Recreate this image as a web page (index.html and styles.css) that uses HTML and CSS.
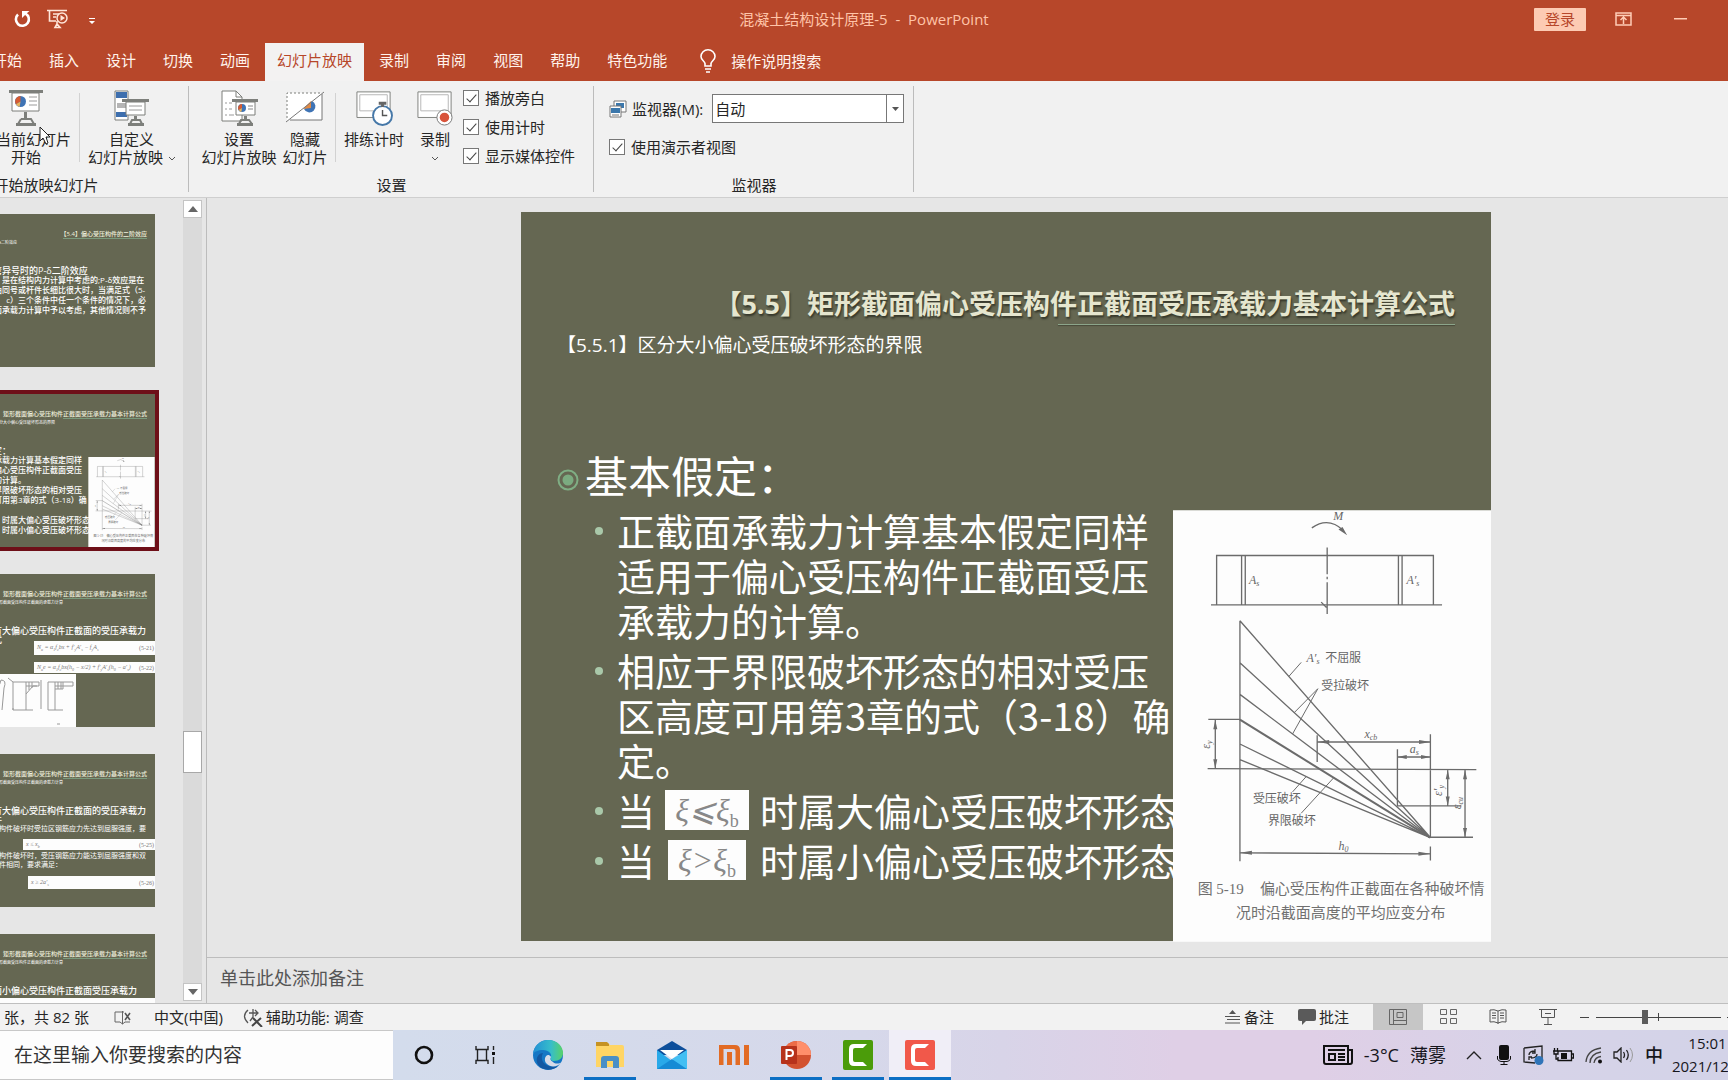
FILE: index.html
```html
<!DOCTYPE html>
<html lang="zh-CN">
<head>
<meta charset="utf-8">
<title>混凝土结构设计原理-5 - PowerPoint</title>
<link rel="stylesheet" href="styles.css">
</head>
<body>
<svg class="defs" aria-hidden="true">
  <symbol id="figure" viewBox="39 30 955 1296">
    <rect x="39" y="30" width="955" height="1296" fill="#fdfdfd"/>
    <g fill="none" stroke="#6b6b6b" stroke-width="4">
      <path d="M456 83Q505 48 550 90M170 314V166H821V314M153 314H847M245 166V314M256 166V314M716 166V314M727 166V314"/>
      <path d="M502 142V222M502 246V342M502 230V237M484 306L500 322" />
      <path d="M240 362V1084M240 362L812 1013M240 488L812 1013M240 583L812 1013M240 732L812 1013M240 779L812 1013"/>
      <path d="M240 659L812 1013" stroke-width="6"/>
      <path d="M145 658H240M143 806L950 809M166 660V805M472 706V786M474 726H812M812 703V1013M713 748V918H905M713 771H812M864 810V918M916 810V1012M805 1012H940M812 1040V1082M240 1059L812 1062"/>
      <path d="M424 487L387 529M474 566L402 639M474 566L398 702M438 831L398 876M523 832L424 940" stroke-width="3"/>
    </g>
    <g fill="#6b6b6b">
      <path d="M562 105L536 88L548 80ZM166 660L160 688H172ZM166 806L160 778H172ZM474 726L508 720V732ZM812 726L778 720V732ZM713 771L741 765V777ZM812 771L784 765V777ZM864 810L858 838H870ZM864 918L858 890H870ZM916 810L910 838H922ZM916 1012L910 984H922ZM240 1059L276 1053V1065ZM812 1062L776 1056V1068Z"/>
    </g>
    <g class="fig-math">
      <text x="520" y="60">M</text>
      <text x="267" y="252">A<tspan class="fig-sub" dy="6">s</tspan></text>
      <text x="740" y="252">A′<tspan class="fig-sub" dy="6">s</tspan></text>
      <text x="440" y="486">A′<tspan class="fig-sub" dy="6">s</tspan></text>
      <text x="614" y="714">x<tspan class="fig-sub" dy="6">cb</tspan></text>
      <text x="750" y="760">a<tspan class="fig-sub" dy="6">s</tspan></text>
      <text x="536" y="1050">h<tspan class="fig-sub" dy="6">0</tspan></text>
      <text transform="translate(150 746) rotate(-90)">ε<tspan class="fig-sub" dy="6">y</tspan></text>
      <text transform="translate(848 888) rotate(-90)">ε′<tspan class="fig-sub" dy="6">y</tspan></text>
      <text transform="translate(904 928) rotate(-90)">ε<tspan class="fig-sub" dy="6">cu</tspan></text>
    </g>
    <g class="fig-note">
      <text x="496" y="487">不屈服</text>
      <text x="484" y="570">受拉破坏</text>
      <text x="279" y="910">受压破坏</text>
      <text x="324" y="976">界限破坏</text>
    </g>
    <g class="fig-caption">
      <text x="113" y="1183">图 5-19</text>
      <text x="300" y="1183">偏心受压构件正截面在各种破坏情</text>
      <text x="228" y="1254">况时沿截面高度的平均应变分布</text>
    </g>
  </symbol>
  <symbol id="easel" viewBox="0 0 34 36">
    <path d="M3 3H30V21H3Z" fill="#fff" stroke="#7d7f7b"/>
    <path d="M0 0H34V3H0ZM15 22H18V29H15ZM7 33H27V36H7Z" fill="#7d7f7b"/>
    <path d="M12 29H22L25 34M12 29L9 34" fill="none" stroke="#7d7f7b" stroke-width="2"/>
  </symbol>
  <symbol id="pie" viewBox="0 0 12 12">
    <circle cx="6" cy="6" r="6" fill="#3f74b5"/>
    <path d="M6 6V0A6 6 0 0 0 1 9Z" fill="#d65a31"/><path d="M6 6L1 9A6 6 0 0 0 5 12Z" fill="#e9b35b"/>
  </symbol>
</svg>

<header class="titlebar">
  <div class="quick">
    <button aria-label="重复"><svg width="18" height="18" viewBox="0 0 18 18"><path d="M5 4.500A6.500 6.500 0 1 0 12.500 3.600" fill="none" stroke="#fff" stroke-width="2.600"/><path d="M9 8V1H16.500L13.500 3.500L9 8Z" fill="#fff"/></svg></button>
    <button aria-label="从头开始放映"><svg width="22" height="20" viewBox="0 0 22 20"><path d="M0 1.500H20M2.500 2V12H9M6 5H12M6 8H9M8 18.500L10 15L13 18.500ZM10 12V15" fill="none" stroke="#ffe6da" stroke-width="1.600"/><circle cx="15" cy="9" r="5" fill="#b7472a" stroke="#ffe6da" stroke-width="1.500"/><path d="M13.500 6V12L18 9Z" fill="#ffe6da"/></svg></button>
    <button aria-label="自定义快速访问工具栏"><svg width="6" height="7" viewBox="0 0 6 7"><path d="M0 0H6V1H0ZM0 3H6L3 6Z" fill="#fff"/></svg></button>
  </div>
  <h1 class="doc-title">混凝土结构设计原理-5&nbsp; -&nbsp; PowerPoint</h1>
  <div class="window-tools">
    <button class="login">登录</button>
    <button aria-label="功能区显示选项"><svg width="17" height="14" viewBox="0 0 17 14"><path d="M1 1H16V13H1ZM1 3.500H16M8.500 12V5.500M5.500 8L8.500 5L11.500 8" fill="none" stroke="#ffcdb6" stroke-width="1.500"/></svg></button>
    <button aria-label="最小化"><svg width="13" height="2" viewBox="0 0 13 2"><path d="M0 0H13V1.500H0Z" fill="#ffcdb6"/></svg></button>
  </div>
</header>

<nav class="tabs">
  <button>开始</button><button>插入</button><button>设计</button><button>切换</button><button>动画</button><button class="active">幻灯片放映</button><button>录制</button><button>审阅</button><button>视图</button><button>帮助</button><button>特色功能</button>
  <button class="tell"><svg width="16" height="24" viewBox="0 0 16 24"><path d="M5 17V14.500C4.500 12 1 11 1 7.500A7 6.700 0 0 1 15 7.500C15 11 11.500 12 11 14.500V17ZM5 20H11M6 23H10" fill="none" stroke="#fff" stroke-width="1.600"/></svg>操作说明搜索</button>
</nav>

<section class="ribbon">
  <div class="group start">
    <div class="row">
      <button class="cmd w-first"><svg width="34" height="36"><use href="#easel"/></svg><span>从头<br>开始</span></button>
      <button class="cmd w-current"><svg width="34" height="36"><use href="#easel"/><use href="#pie" x="6" y="6" width="11" height="11"/><path d="M20 7H28M20 11H28M20 15H28" stroke="#9a9a9a"/></svg><span>从当前幻灯片<br>开始</span></button>
      <i class="sep"></i>
      <button class="cmd w-custom"><svg width="36" height="36" viewBox="0 0 36 36"><path d="M1 1H14V30H1Z" fill="#fff" stroke="#7d7f7b"/><path d="M2 2H13V8H2ZM2 22H13V27H2Z" fill="#3e6fae"/><path d="M3 13H13V18H3Z" fill="#b5b5b5"/><path d="M12 12H31V25H12Z" fill="#fff" stroke="#7d7f7b"/><path d="M8 9H35V12H8ZM20 26H23V30H20ZM14 33H30V36H14Z" fill="#7d7f7b"/><path d="M16 34L18 30H26L28 34" fill="none" stroke="#7d7f7b" stroke-width="2"/><path d="M15 16H28M15 20H28" stroke="#9a9a9a"/></svg><span>自定义<br>幻灯片放映<svg class="caret" width="6" height="4" viewBox="0 0 6 4"><path d="M0 0L3 3L6 0" fill="none" stroke="#555"/></svg></span></button>
    </div>
    <h2>开始放映幻灯片</h2>
  </div>
  <div class="group setup">
    <div class="row">
      <button class="cmd w-setup"><svg width="37" height="36" viewBox="0 0 37 36"><path d="M1 1H15L21 7V31H1Z" fill="#fff" stroke="#7d7f7b"/><path d="M15 1V7H21" fill="none" stroke="#7d7f7b"/><path d="M4 13H6M4 19H6M4 25H6M8 13H11M8 19H11M8 25H13" stroke="#999"/><path d="M15 12H34V25H15Z" fill="#fff" stroke="#7d7f7b"/><path d="M11 9H37V12H11ZM23 26H26V30H23ZM16 33H32V36H16Z" fill="#7d7f7b"/><path d="M18 34L20 30H28L31 34" fill="none" stroke="#7d7f7b" stroke-width="2"/><use href="#pie" x="17" y="14" width="8" height="8"/><path d="M27 16H32M27 19H32" stroke="#888"/></svg><span>设置<br>幻灯片放映</span></button>
      <button class="cmd w-hide"><svg width="38" height="36" viewBox="0 0 38 36"><path d="M1 3H36V30H1Z" fill="#fff"/><path d="M1 28V3H34" fill="none" stroke="#7d7f7b" stroke-dasharray="2 2"/><path d="M18 19L26 11A6 6 0 1 1 18 19Z" fill="#3f74b5"/><path d="M17 19L25 11V18Z" fill="#e28a45"/><path d="M0 32L38 2M4 30H36V4" fill="none" stroke="#777"/></svg><span>隐藏<br>幻灯片</span></button>
      <i class="sep"></i>
      <button class="cmd w-timing"><svg width="38" height="38" viewBox="0 0 38 38"><path d="M1 2H36V29H1Z" fill="#fff" stroke="#7d7f7b"/><path d="M4 5H33V22H4Z" fill="none" stroke="#b5b5b5"/><circle cx="28" cy="27" r="10" fill="#fff" stroke="#4678a8" stroke-width="2"/><path d="M24 14H32M28 14V18" stroke="#666" stroke-width="3"/><path d="M28 21V27H33" fill="none" stroke="#555" stroke-width="1.500"/></svg><span>排练计时</span></button>
      <button class="cmd w-record"><svg width="38" height="38" viewBox="0 0 38 38"><path d="M1 2H36V29H1Z" fill="#fff" stroke="#7d7f7b"/><path d="M4 5H33V22H4Z" fill="none" stroke="#b5b5b5"/><circle cx="29" cy="29" r="8" fill="#fff" stroke="#777"/><circle cx="29" cy="29" r="5" fill="#d8533a"/></svg><span>录制<br><svg class="caret" width="6" height="4" viewBox="0 0 6 4"><path d="M0 0L3 3L6 0" fill="none" stroke="#555"/></svg></span></button>
      <div class="checks">
        <label><input type="checkbox" checked>播放旁白</label>
        <label><input type="checkbox" checked>使用计时</label>
        <label><input type="checkbox" checked>显示媒体控件</label>
      </div>
    </div>
    <h2>设置</h2>
  </div>
  <div class="group monitor">
    <div class="row">
      <div class="mon-line">
        <svg width="18" height="18" viewBox="0 0 18 18"><path d="M5 1H17V12H5Z" fill="#fff" stroke="#777"/><path d="M7 3H15V8H7Z" fill="#3b77ab"/><path d="M1 6H12V17H1Z" fill="#fff" stroke="#777"/><path d="M2 8H11V13H2Z" fill="#3b77ab"/><path d="M3 15H10" stroke="#777"/></svg>
        <label for="mon">监视器(M):</label>
        <div class="combo"><select id="mon"><option>自动</option></select><span><svg width="7" height="4" viewBox="0 0 7 4"><path d="M0 0H7L3.500 4Z" fill="#555"/></svg></span></div>
      </div>
      <label><input type="checkbox" checked>使用演示者视图</label>
    </div>
    <h2>监视器</h2>
  </div>
  <svg class="cursor" width="13" height="19" viewBox="0 0 13 19"><path d="M1 1V15L4 12L7 18L9 17L7 11H11Z" fill="#fff" stroke="#222"/></svg>
</section>

<main class="workspace">
  <aside class="thumbs">
    <article class="thumb">
      <h3>【5.4】偏心受压构件的二阶效应</h3><p class="t-sub t-short">P-δ二阶效应</p>
      <p class="t-head">弯异号时的P-δ二阶效应</p>
      <p class="t-body">　是在结构内力计算中考虑的;P-δ效应是在<br>曲同号或杆件长细比很大时，当满足式（5-<br>　&nbsp; c）三个条件中任一个条件的情况下，必<br>面承载力计算中予以考虑，其他情况则不予</p>
    </article>
    <article class="thumb selected">
      <h3>5】矩形截面偏心受压构件正截面受压承载力基本计算公式</h3><p class="t-sub">区分大小偏心受压破坏形态的界限</p>
      <p class="t-head">定：</p>
      <p class="t-body">承载力计算基本假定同样<br>偏心受压构件正截面受压<br>的计算。<br>界限破坏形态的相对受压<br>可用第3章的式（3-18）确<br><br>　时属大偏心受压破坏形态<br>　时属小偏心受压破坏形态</p>
      <svg class="t-figure"><use href="#figure"/></svg>
    </article>
    <article class="thumb">
      <h3>5】矩形截面偏心受压构件正截面受压承载力基本计算公式</h3><p class="t-sub">矩形截面受压构件正截面的承载力计算</p>
      <p class="t-head">有大偏心受压构件正截面的受压承载力<br>式</p>
      <div class="eq eq-a"><i>N<sub>u</sub> = α<sub>1</sub>f<sub>c</sub>bx + f′<sub>y</sub>A′<sub>s</sub> − f<sub>y</sub>A<sub>s</sub></i><b>(5-21)</b></div>
      <div class="eq eq-b"><i>N<sub>u</sub>e = α<sub>1</sub>f<sub>c</sub>bx(h<sub>0</sub> − x/2) + f′<sub>y</sub>A′<sub>s</sub>(h<sub>0</sub> − a′<sub>s</sub>)</i><b>(5-22)</b></div>
      <svg class="t-sketch" width="125" height="53" viewBox="0 0 125 53"><rect width="125" height="53" fill="#fdfdfd"/><path d="M42 12Q48 16 50 6Q56 6 53 14L51 36M57 4L62 8H75V36H62V8M75 8H88V12H82L75 20M75 12H86M90 6V35M97 8H104V36H97ZM104 8H122V12H104M104 15H112V8M107 8V15M110 8V15M78 8V16M81 8V14M62 36V34M75 36H82M104 36H112M106 50H109" fill="none" stroke="#999"/></svg>
    </article>
    <article class="thumb">
      <h3>5】矩形截面偏心受压构件正截面受压承载力基本计算公式</h3><p class="t-sub">矩形截面受压构件正截面的承载力计算</p>
      <p class="t-head">有大偏心受压构件正截面的受压承载力<br>件</p>
      <p class="t-note">证构件破坏时受拉区钢筋应力先达到屈服强度，要</p>
      <div class="eq eq-c"><i>x ≤ x<sub>b</sub></i><b>(5-25)</b></div>
      <p class="t-note t-gap">证构件破坏时，受压钢筋应力能达到屈服强度和双<br>构件相同，要求满足：</p>
      <div class="eq eq-d"><i>x ≥ 2a′<sub>s</sub></i><b>(5-26)</b></div>
    </article>
    <article class="thumb">
      <h3>5】矩形截面偏心受压构件正截面受压承载力基本计算公式</h3><p class="t-sub">矩形截面受压构件正截面的承载力计算</p>
      <p class="t-head">面小偏心受压构件正截面受压承载力</p>
      <div class="eq eq-e"></div>
    </article>
  </aside>
  <div class="scroll">
    <button aria-label="向上"><svg width="10" height="6" viewBox="0 0 10 6"><path d="M0 6L5 0L10 6Z" fill="#666"/></svg></button>
    <i class="track-a"></i><i class="grip"></i><i class="track-b"></i>
    <button aria-label="向下"><svg width="10" height="6" viewBox="0 0 10 6"><path d="M0 0L5 6L10 0Z" fill="#666"/></svg></button>
  </div>
  <div class="editor">
    <div class="stage">
      <article class="slide">
        <h2 class="s-title">【5.5】矩形截面偏心受压构件正截面受压承载力基本计算公式</h2>
        <p class="s-sub">【5.5.1】区分大小偏心受压破坏形态的界限</p>
        <div class="s-head"><svg width="22" height="22" viewBox="0 0 22 22"><circle cx="11" cy="11" r="9.500" fill="none" stroke="#7fae84" stroke-width="2"/><circle cx="11" cy="11" r="5.500" fill="#7bab80"/></svg>基本假定：</div>
        <ul class="s-list">
          <li>正截面承载力计算基本假定同样<br>适用于偏心受压构件正截面受压<br>承载力的计算。</li>
          <li>相应于界限破坏形态的相对受压<br>区高度可用第3章的式（3-18）确<br>定。</li>
          <li class="case">当<span class="formula wide">ξ⩽ξ<sub>b</sub></span>时属大偏心受压破坏形态</li>
          <li class="case">当<span class="formula">ξ&gt;ξ<sub>b</sub></span>时属小偏心受压破坏形态</li>
        </ul>
        <svg class="s-figure"><use href="#figure"/></svg>
      </article>
    </div>
    <textarea class="notes" aria-label="备注" placeholder="单击此处添加备注"></textarea>
  </div>
</main>

<footer class="status">
  <span class="st-page">张，共 82 张</span>
  <button class="st-spell" aria-label="拼写检查"><svg width="18" height="16" viewBox="0 0 18 16"><path d="M8.500 2V15M8.500 3H1V13H6L8.500 15L11 13H16M8.500 3H10" fill="none" stroke="#666"/><path d="M11 4L16 11M16 4L11 11" stroke="#555" stroke-width="1.600"/></svg></button>
  <button class="st-lang">中文(中国)</button>
  <button class="st-acc"><svg width="20" height="20" viewBox="0 0 20 20"><path d="M5 3Q-2 9 5 16M6 6H15M10 2V10L7 14M12 3L15 6L12 9" fill="none" stroke="#555" stroke-width="1.300"/><path d="M10 11L19 20M18 11L9 19" stroke="#444" stroke-width="2"/></svg>辅助功能: 调查</button>
  <div class="st-right">
    <button class="st-note"><svg width="15" height="14" viewBox="0 0 15 14"><path d="M7.500 0L11 4H4ZM0 6H15V7H0ZM2 9H15V10H2ZM0 12.500H15V13.500H0Z" fill="#555"/></svg>备注</button>
    <button class="st-comment"><svg width="18" height="16" viewBox="0 0 18 16"><path d="M2 0H16Q18 0 18 2V10Q18 12 16 12H8L4 16V12H2Q0 12 0 10V2Q0 0 2 0Z" fill="#5a5a5a"/></svg>批注</button>
    <button class="view on" aria-label="普通"><svg width="18" height="16" viewBox="0 0 18 16"><path d="M.5.500H17.500V15.500H.5ZM4.500.500V15.500M4.500 11.500H17.500M8 3.500H14V8.500H8Z" fill="none" stroke="#666"/></svg></button>
    <button class="view" aria-label="幻灯片浏览"><svg width="17" height="16" viewBox="0 0 17 16"><path d="M.5.500H6.500V5.500H.5ZM10.500.500H16.500V5.500H10.500ZM.5 9.500H6.500V14.500H.5ZM10.500 9.500H16.500V14.500H10.500Z" fill="none" stroke="#666"/></svg></button>
    <button class="view" aria-label="阅读视图"><svg width="18" height="16" viewBox="0 0 18 16"><path d="M9 2V15M9 2Q5 0 1 1V13Q5 12 9 14Q13 12 17 13V1Q13 0 9 2M3 4H7M3 6.500H7M3 9H7M11 4H15M11 6.500H15M11 9H15" fill="none" stroke="#555"/></svg></button>
    <button class="view" aria-label="幻灯片放映"><svg width="18" height="16" viewBox="0 0 18 16"><path d="M0 .5H18M2.500.500V8.500H15.500V.5M6 4.500H12M9 8.500V15M5 15.500H13" fill="none" stroke="#555"/></svg></button>
    <button class="minus" aria-label="缩小"><svg width="9" height="1" viewBox="0 0 9 1"><path d="M0 0H9V1H0Z" fill="#444"/></svg></button>
    <input class="zoom" type="range" min="0" max="100" value="39" aria-label="缩放">
    <button class="plus" aria-label="放大"><svg width="9" height="9" viewBox="0 0 9 9"><path d="M0 4H9V5H0ZM4 0H5V9H4Z" fill="#444"/></svg></button>
  </div>
</footer>

<footer class="taskbar">
  <input class="search" type="text" placeholder="在这里输入你要搜索的内容" aria-label="搜索">
  <div class="apps">
    <button aria-label="Cortana"><svg width="22" height="22" viewBox="0 0 22 22"><circle cx="11" cy="11" r="8" fill="none" stroke="#111" stroke-width="2.600"/></svg></button>
    <button aria-label="任务视图"><svg width="22" height="20" viewBox="0 0 22 20"><path d="M1 1V4.500H13V1M2.500 4.500V15.500M11.500 4.500V15.500M1 19V15.500H13V19M18.500 1V5M18.500 12V19" fill="none" stroke="#222" stroke-width="1.400"/><path d="M17 7H20V10H17Z" fill="#111"/></svg></button>
    <button aria-label="Edge"><svg width="30" height="30" viewBox="0 0 30 30"><defs><linearGradient id="eg" x1="0" y1="0" x2="1" y2="0"><stop offset="0" stop-color="#2390d5"/><stop offset=".6" stop-color="#37bdca"/><stop offset="1" stop-color="#58d267"/></linearGradient></defs><circle cx="15" cy="15" r="15" fill="#1677c5"/><path d="M0 14C1 5 8 0 15 0C25 0 30 7 30 13C30 18 26 21 21 21C18 21 17 19 18 17C19 14 16 10 10 10C5 10 1 12 0 14Z" fill="url(#eg)"/><path d="M10 13C6 20 12 29 25 26C20 31 11 31 6 26C1 20 5 13 10 13Z" fill="#1358a2"/><path d="M18 17C14 11 9 20 14 24C18 28 25 27 29 22C26 24 22 24 20 22C17 20 17 19 18 17Z" fill="#d7dbe8"/></svg></button>
    <button class="open" aria-label="文件资源管理器"><svg width="28" height="26" viewBox="0 0 28 26"><path d="M0 1H12L14 3H26Q28 3 28 5V25H0Z" fill="#ffd565"/><path d="M0 0H11L13 2V4H0Z" fill="#c69222"/><path d="M5 26V17Q5 14 8 14H20Q23 14 23 17V26H17V19H11V26Z" fill="#4a8fc7"/></svg></button>
    <button aria-label="邮件"><svg width="30" height="30" viewBox="0 0 30 30"><path d="M0 10L15 1L30 10V15H0Z" fill="#0e4f9b"/><path d="M0 10L15 21L30 10V29H0Z" fill="#29a9e9"/><path d="M3 10H27L15 19Z" fill="#fff"/><path d="M0 29L15 19L30 29Z" fill="#168bd5"/><path d="M30 10L15 19L30 29Z" fill="#43bff3"/></svg></button>
    <button aria-label="小米"><svg width="30" height="20" viewBox="0 0 30 20"><path d="M0 0H16Q21 0 21 5V20H16.500V6Q16.500 4 14.500 4H4.500V20H0ZM8 7H13V20H8ZM25 0H30V20H25Z" fill="#e26b24"/></svg></button>
    <button class="open" aria-label="PowerPoint"><svg width="30" height="28" viewBox="0 0 30 28"><circle cx="16" cy="14" r="14" fill="#d35230"/><path d="M16 14V0A14 14 0 0 1 30 14Z" fill="#ff8f6b"/><path d="M16 14V0A14 14 0 0 0 2 14Z" fill="#ed6c47"/><rect y="5" width="16" height="18" rx="1" fill="#b7321b"/><path d="M5.500 19V9H9Q12 9 12 12Q12 15 9 15H5.500" fill="none" stroke="#fff" stroke-width="2"/></svg></button>
    <button class="open" aria-label="Camtasia"><svg width="30" height="30" viewBox="0 0 30 30"><rect width="30" height="30" rx="2" fill="#4b9c0a"/><path d="M24 4H11Q6 4 6 9V21Q6 26 11 26H24L20 22H12Q10 22 10 20V10Q10 8 12 8H20Z" fill="#fff"/></svg></button>
    <button class="open current" aria-label="Camtasia 录像机"><svg width="30" height="30" viewBox="0 0 30 30"><rect width="30" height="30" rx="2" fill="#f1584a"/><path d="M24 4H11Q6 4 6 9V21Q6 26 11 26H24L20 22H12Q10 22 10 20V10Q10 8 12 8H20Z" fill="#fff"/></svg></button>
  </div>
  <div class="tray">
    <button class="weather"><svg width="30" height="20" viewBox="0 0 30 20"><path d="M1 1H25V19H3Q1 19 1 17ZM25 5H29V17Q29 19 27 19H24M5 5H22" fill="none" stroke="#111" stroke-width="2"/><path d="M6 9H12V15H6ZM15 9H22M15 12H22M15 15H22" fill="none" stroke="#111" stroke-width="2"/></svg><span>-3°C</span><span>薄雾</span></button>
    <button class="tr" aria-label="显示隐藏的图标"><svg width="16" height="10" viewBox="0 0 16 10"><path d="M1 9L8 2L15 9" fill="none" stroke="#222" stroke-width="1.400"/></svg></button>
    <button class="tr" aria-label="麦克风"><svg width="14" height="20" viewBox="0 0 14 20"><rect x="2" width="10" height="15" rx="2" fill="#111"/><path d="M.5 11V14Q1 16 4 16.500H10Q13 16 13.500 14V11M7 16V19M3.500 19.500H10.500" fill="none" stroke="#111"/></svg></button>
    <button class="tr" aria-label="更新"><svg width="21" height="20" viewBox="0 0 21 20"><path d="M1 3L19 1V14M1 3V17L12 18" fill="none" stroke="#222" stroke-width="1.300"/><path d="M6 10Q6 6 12 6M12 4V8H9M14 9Q14 13 8 13M6 15V12H9" fill="none" stroke="#222" stroke-width="1.300"/><circle cx="16" cy="15.500" r="4.500" fill="#2f74b8"/></svg></button>
    <button class="tr" aria-label="电池"><svg width="21" height="14" viewBox="0 0 21 14"><path d="M5 3H18.500V12.500H5V9M18.500 6H20.500V10H18.500M0 3H6M1.500 0V3M4.500 0V3M1 3V6H5V3M3 6V11H5" fill="none" stroke="#111" stroke-width="1.300"/><path d="M8 5H14V11H8Z" fill="#111"/></svg></button>
    <button class="tr" aria-label="网络"><svg width="18" height="17" viewBox="0 0 18 17"><path d="M1 15Q2 3 16 1M5 16Q5 7 16 5M9 16Q10 10 16 9.500" fill="none" stroke="#444" stroke-width="1.300"/><circle cx="15" cy="14.500" r="2" fill="#111"/></svg></button>
    <button class="tr" aria-label="音量"><svg width="21" height="16" viewBox="0 0 21 16"><path d="M1 5H4L8 1V15L4 11H1ZM10.500 5Q12.500 8 10.500 11M13.500 3Q17 8 13.500 13" fill="none" stroke="#222" stroke-width="1.300"/><path d="M17 1Q22 8 17 15" fill="none" stroke="#999"/></svg></button>
    <button class="tr ime">中</button>
    <button class="clock">15:01<br>2021/12/1</button>
  </div>
</footer>
</body>
</html>
```
FILE: styles.css
```css
* { box-sizing: border-box; }
html, body { height: 100%; }
body {
  margin: 0;
  display: flex;
  flex-direction: column;
  overflow: hidden;
  background: #e6e6e6;
  color: #262626;
  font: 15px/18px "Open Sans", "Noto Sans CJK SC", sans-serif;
}
h1, h2, h3, p, ul { margin: 0; padding: 0; font-weight: 400; }
button, input, select, textarea { font: inherit; color: inherit; }
button { border: 0; padding: 0; background: none; white-space: nowrap; }
svg { display: block; flex: none; }
i { font-style: normal; }
.defs { position: absolute; width: 0; height: 0; }

/* title bar */
.titlebar {
  display: grid;
  grid-template-columns: 1fr auto 1fr;
  align-items: center;
  height: 43px;
  padding: 0 41px 5px 13px;
  background: #b7472a;
}
.quick { display: flex; align-items: center; gap: 16px; }
.quick button:last-child { margin-left: 4px; padding-top: 4px; }
.doc-title { font-size: 15px; line-height: 18px; color: #ffc4a8; margin-left: 28px; }
.window-tools { display: flex; align-items: center; justify-content: flex-end; gap: 42px; }
.window-tools .login { width: 52px; height: 23px; margin-right: -13px; background: #fdcbb3; color: #b7472a; border-radius: 1px; }

/* tabs */
.tabs { display: flex; gap: 3px; height: 38px; margin-left: -20px; flex: none; background: #b7472a; color: #fff3ec; }
.tabs button { padding: 0 12px 4px; line-height: 18px; }
.tabs .active { background: #f3f2f2; color: #b7472a; }
.tabs .tell { display: flex; align-items: center; gap: 15px; padding: 0 0 2px 18px; }

/* ribbon */
.ribbon { position: relative; display: flex; flex: none; height: 117px; background: #f1f1f1; border-bottom: 1px solid #cfcfcf; }
.group { position: relative; display: flex; flex-direction: column; justify-content: space-between; padding: 9px 0 3px; }
.group::after { content: ""; position: absolute; right: 0; top: 5px; bottom: 5px; width: 1px; background: #bcbcbc; }
.group h2 { font-size: 15px; line-height: 18px; text-align: center; }
.row { display: flex; }
.start { width: 286px; margin-left: -97px; }
.setup { width: 405px; }
.setup .row { padding-left: 11px; }
.cmd { display: flex; flex-direction: column; align-items: center; height: 78px; text-align: center; }
.cmd > svg { margin-bottom: 4px; height: 36px; overflow: visible; }
.w-first { width: 73px; }
.w-current { width: 100px; }
.w-custom { width: 95px; }
.w-setup { width: 78px; }
.w-hide { width: 54px; }
.w-timing { width: 68px; }
.w-record { width: 54px; }
.sep { width: 1px; margin: 3px 4px 6px 3px; background: #d2d2d2; }
.caret { display: inline-block; margin-left: 6px; vertical-align: 2px; }
.w-record .caret { margin: 0; }
.checks { display: flex; flex-direction: column; gap: 11px; margin: -1px 0 0 1px; }
label { display: flex; align-items: center; gap: 6px; white-space: nowrap; }
input[type="checkbox"] { appearance: none; position: relative; flex: none; width: 16px; height: 16px; margin: 0; background: #fff; border: 1px solid #777; }
input[type="checkbox"]::after { content: ""; position: absolute; left: 5px; top: 1px; width: 4px; height: 9px; border: solid #444; border-width: 0 1px 1px 0; transform: rotate(42deg); }
.monitor { width: 320px; }
.monitor .row { flex-direction: column; gap: 15px; padding: 4px 10px 0 15px; }
.mon-line { display: flex; align-items: center; gap: 5px; }
.combo { display: flex; flex: 1; height: 29px; margin-left: 4px; border: 1px solid #777; background: #fff; }
.combo select { flex: 1; appearance: none; border: 0; padding: 0 2px; background: #fff; }
.combo span { display: flex; align-items: center; justify-content: center; width: 17px; border-left: 1px solid #777; }
.cursor { position: absolute; left: 39px; top: 45px; }

/* workspace */
.workspace { display: flex; flex: 1; min-height: 0; }
.thumbs { display: flex; flex-direction: column; align-items: flex-end; gap: 27px; width: 183px; padding: 16px 28px 0 0; overflow: hidden; }
.thumb { position: relative; flex: none; width: 204px; height: 153px; padding: 16px 8px 0 41px; background: #656752; color: #fff; overflow: hidden; white-space: nowrap; }
.selected { overflow: visible; outline: 4px solid #6e0f18; }
.thumb h3 { display: flex; justify-content: flex-end; font-size: 6px; line-height: 8px; font-weight: 500; color: #eeefdc; }
.thumb h3::after { content: ""; position: absolute; right: 8px; top: 24px; width: 84px; height: 1px; background: #7b9a7c; }
.t-sub { font-size: 4px; line-height: 8px; margin-top: 1px; padding-left: 3px; }
.t-head { font-size: 9px; line-height: 9px; margin-top: 19px; padding-left: 1px; font-weight: 500; }
.t-body { font-size: 8px; line-height: 10px; margin-left: 2px; font-weight: 500; }
.t-note { font-size: 7px; line-height: 9px; }
.t-gap { margin-top: 18px; }
.t-figure { position: absolute; right: 0; bottom: 0; width: 67px; height: 90px; }
.t-sketch { position: absolute; left: 0; bottom: 0; }
.eq { position: absolute; right: 0; display: flex; align-items: center; justify-content: space-between; padding: 0 1px 0 3px; background: #fdfdfd; color: #777; font: 6px/8px "Liberation Serif", serif; }
.eq i { font-style: italic; }
.eq b { font-weight: 400; }
.eq sub { font-size: 4px; line-height: 4px; }
.eq-a { top: 67px; width: 121px; height: 14px; }
.eq-b { top: 88px; width: 121px; height: 11px; }
.eq-c { top: 85px; width: 132px; height: 11px; }
.eq-d { top: 122px; width: 127px; height: 13px; }
.eq-e { top: 64px; width: 204px; height: 20px; }

.scroll { display: flex; flex-direction: column; width: 19px; padding: 2px 0; }
.scroll button { display: flex; align-items: center; justify-content: center; height: 18px; border: 1px solid #c4c4c4; background: #fff; }
.scroll .track-a { flex: 512; background: #dadada; }
.scroll .grip { height: 42px; border: 1px solid #a8a8a8; background: #fff; }
.scroll .track-b { flex: 210; background: #dadada; }

.editor { display: flex; flex: 1; flex-direction: column; min-width: 0; margin-left: 4px; border-left: 1px solid #bcbcbc; }
.stage { display: flex; flex: 1; justify-content: center; align-items: flex-start; padding: 14px 0 0 77px; }
.slide { position: relative; flex: none; width: 970px; height: 729px; padding: 72px 36px 0; background: #656752; color: #fff; white-space: nowrap; }
.s-title { position: relative; font-size: 27px; line-height: 40px; font-weight: 700; text-align: right; color: #e5e6cf; text-shadow: 1px 2px 2px #35372a; }
.s-title::after { content: ""; position: absolute; right: 0; bottom: -1px; width: 397px; height: 1px; background: #8ca58a; box-shadow: 0 1px 1px #454838; }
.s-sub { margin-top: 7px; font-size: 19px; line-height: 28px; }
.s-head { display: flex; align-items: center; gap: 6px; margin-top: 88px; font-size: 43px; line-height: 60px; }
.s-head svg { margin-top: 6px; }
.s-list { display: flex; flex-direction: column; gap: 5px; padding-left: 60px; list-style: none; font-size: 38px; line-height: 45px; font-family: "Noto Sans CJK SC", sans-serif; }
.s-list li { position: relative; }
.s-list li::before { content: ""; position: absolute; left: -22px; top: 20px; width: 8px; height: 8px; border-radius: 50%; background: #a9c8a9; }
.s-list .case { display: flex; align-items: center; height: 45px; }
.formula { display: flex; align-items: center; justify-content: center; width: 78px; height: 40px; margin: 0 14px 0 13px; background: #fdfdfd; color: #888; font: italic 32px/36px "Liberation Serif", serif; }
.formula.wide { width: 84px; margin: 0 11px 0 10px; }
.formula sub { font: 18px/18px "Liberation Serif", serif; align-self: flex-end; }
.s-figure { position: absolute; right: 0; bottom: -1px; width: 318px; height: 432px; }
.fig-math { font: italic 36px "Liberation Serif", serif; fill: #666; }
.fig-sub { font-size: 24px; }
.fig-note { font: 36px "Noto Sans CJK SC", sans-serif; fill: #666; }
.fig-caption { font: 45px "Liberation Serif", "Noto Sans CJK SC", serif; fill: #707070; }
.notes { height: 46px; flex: none; border: 0; border-top: 1px solid #bdbdbd; padding: 8px 13px; resize: none; background: #e6e6e6; font-size: 18px; line-height: 24px; overflow: hidden; outline: 0; }
.notes::placeholder { color: #555; opacity: 1; }

/* status bar */
.status { display: flex; align-items: center; flex: none; height: 27px; padding-left: 4px; background: #f2f2f2; border-top: 1px solid #bfbfbf; white-space: nowrap; }
.status button { display: flex; align-items: center; }
.st-spell { margin-left: 25px; }
.st-lang { margin-left: 22px; }
.st-acc { margin-left: 20px; gap: 3px; }
.st-right { display: flex; align-items: center; height: 100%; margin-left: auto; margin-right: -8px; }
.st-note { gap: 4px; }
.st-comment { gap: 3px; margin: 0 24px; }
.status .view { justify-content: center; width: 50px; height: 100%; }
.status .on { background: #c6c6c6; }
.minus { margin: 0 7px; }
.plus { margin-left: 6px; }
.zoom { appearance: none; width: 125px; height: 16px; margin: 0; background: linear-gradient(#444, #444) center / 100% 1px no-repeat, linear-gradient(#444, #444) 50% 50% / 1px 8px no-repeat; }
.zoom::-webkit-slider-thumb { appearance: none; width: 6px; height: 14px; background: #5c5c5c; }

/* taskbar */
.taskbar { display: flex; flex: none; height: 50px; background: linear-gradient(90deg, #d3dcec 23%, #d6d8ea 50%, #d8d4e8 58%, #dfcfe6 68%, #dfcfe6 76%, #d6d3e8 90%, #d3d3e8); color: #16161c; }
.search { width: 393px; border: 1px solid #c8c8c8; border-width: 1px 0; padding: 0 14px; background: #fdfdfd; font-size: 19px; outline: 0; }
.search::placeholder { color: #333; opacity: 1; }
.apps { display: flex; }
.apps button { position: relative; display: flex; align-items: center; justify-content: center; width: 62px; }
.apps .open::after { content: ""; position: absolute; left: 5px; right: 5px; bottom: 0; height: 3px; background: #0c6fc4; }
.apps .current { background: #f0eef7; }
.apps .current::after { left: 0; right: 0; }
.tray { display: flex; align-items: center; margin-left: auto; margin-right: -15px; }
.weather { display: flex; align-items: center; gap: 11px; margin-right: 13px; font-size: 18px; }
.tr { display: flex; align-items: center; justify-content: center; width: 30px; height: 50px; }
.ime { font-size: 18px; font-weight: 500; }
.clock { margin-left: 3px; font-size: 15px; line-height: 23px; text-align: center; }
```
